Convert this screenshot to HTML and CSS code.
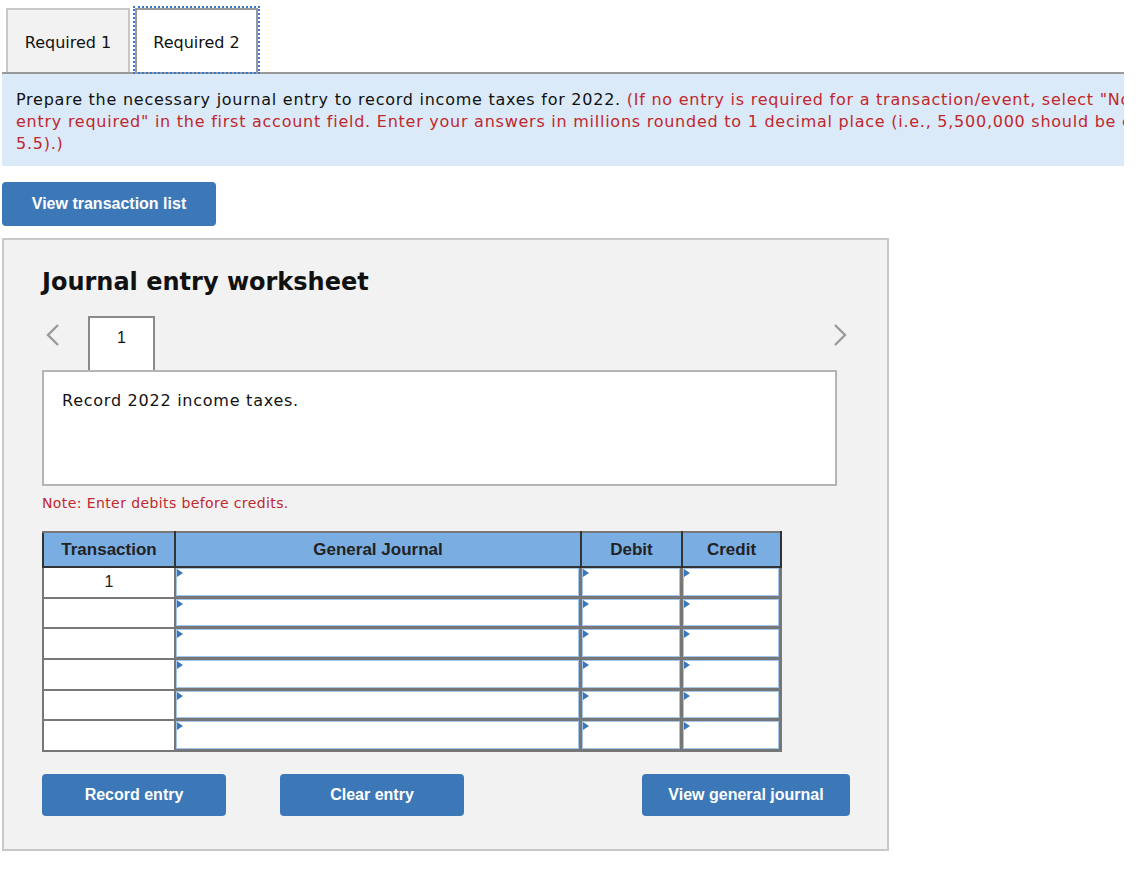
FILE: index.html
```html
<!DOCTYPE html>
<html lang="en">
<head>
  <meta charset="UTF-8">
  <meta name="viewport" content="width=device-width, initial-scale=1.0">
  <title>Journal entry worksheet</title>
  <link rel="stylesheet" href="styles.css">
</head>
<body>
  <div class="page">
    <div class="tabs">
      <div class="tab">Required 1</div>
      <div class="tab active">Required 2</div>
    </div>
    <div class="instructions">
      <p>Prepare the necessary journal entry to record income taxes for 2022. <span class="red">(If no entry is required for a transaction/event, select "No</span><br>
      <span class="red">entry required" in the first account field. Enter your answers in millions rounded to 1 decimal place (i.e., 5,500,000 should be entered as</span><br>
      <span class="red">5.5).)</span></p>
    </div>
    <button class="btn btn-list">View transaction list</button>

    <div class="worksheet">
      <h2>Journal entry worksheet</h2>
      <div class="nav">
        <svg class="chevron" width="14" height="24" viewBox="0 0 14 24"><polyline points="12,2 2,12 12,22" fill="none" stroke="#9a9a9a" stroke-width="2.4"/></svg>
        <div class="step">1</div>
        <svg class="chevron right" width="14" height="24" viewBox="0 0 14 24"><polyline points="2,2 12,12 2,22" fill="none" stroke="#9a9a9a" stroke-width="2.4"/></svg>
      </div>
      <div class="description">Record 2022 income taxes.</div>
      <p class="note">Note: Enter debits before credits.</p>

      <table class="journal">
        <thead>
          <tr>
            <th class="col-tr">Transaction</th>
            <th class="col-gj">General Journal</th>
            <th class="col-dr">Debit</th>
            <th class="col-cr">Credit</th>
          </tr>
        </thead>
        <tbody>
          <tr><td class="tr">1</td><td class="cell"><div class="field"></div></td><td class="cell"><div class="field"></div></td><td class="cell"><div class="field"></div></td></tr>
          <tr><td class="tr"></td><td class="cell"><div class="field"></div></td><td class="cell"><div class="field"></div></td><td class="cell"><div class="field"></div></td></tr>
          <tr><td class="tr"></td><td class="cell"><div class="field"></div></td><td class="cell"><div class="field"></div></td><td class="cell"><div class="field"></div></td></tr>
          <tr><td class="tr"></td><td class="cell"><div class="field"></div></td><td class="cell"><div class="field"></div></td><td class="cell"><div class="field"></div></td></tr>
          <tr><td class="tr"></td><td class="cell"><div class="field"></div></td><td class="cell"><div class="field"></div></td><td class="cell"><div class="field"></div></td></tr>
          <tr><td class="tr"></td><td class="cell"><div class="field"></div></td><td class="cell"><div class="field"></div></td><td class="cell"><div class="field"></div></td></tr>
        </tbody>
      </table>

      <div class="actions">
        <button class="btn btn-record">Record entry</button>
        <button class="btn btn-clear">Clear entry</button>
        <button class="btn btn-journal">View general journal</button>
      </div>
    </div>
  </div>
</body>
</html>
```

FILE: styles.css
```css
body {
  margin: 0;
  font-family: "DejaVu Sans", Verdana, sans-serif;
  color: #111;
  background: #fff;
}
.page {
  width: 1122px;
  padding-left: 2px;
}
.tabs {
  display: flex;
  gap: 5px;
  padding: 8px 0 0 4px;
  border-bottom: 2px solid #999;
}
.tab {
  box-sizing: border-box;
  width: 124px;
  height: 64px;
  line-height: 66px;
  text-align: center;
  font-size: 16px;
  background: #f2f2f2;
  border: 2px solid #c8c8c8;
  border-bottom: none;
}
.tab.active {
  width: 123px;
  background: #fff;
  border-color: #9a9a9a;
  outline: 2px dotted #3a78c8;
  outline-offset: 0;
}
/* the instruction text runs past the right edge and is clipped, as on the original page */
.instructions {
  height: 92px;
  overflow: hidden;
  background: #dbeaf8;
}
.instructions p {
  margin: 0;
  padding: 15px 0 0 14px;
  font-size: 16px;
  line-height: 22px;
  letter-spacing: 0.75px;
  white-space: nowrap;
}
.red {
  color: #c1272d;
}
.btn {
  border: none;
  border-radius: 4px;
  background: #3c78b8;
  color: #fff;
  font-family: "Liberation Sans", Arial, sans-serif;
  font-weight: bold;
  font-size: 16px;
  cursor: pointer;
}
.btn-list {
  display: block;
  margin-top: 16px;
  width: 214px;
  height: 44px;
}
.worksheet {
  box-sizing: border-box;
  width: 887px;
  margin-top: 12px;
  padding: 0 37px 33px 38px;
  background: #f2f2f2;
  border: 2px solid #c8c8c8;
}
.worksheet h2 {
  margin: 0;
  padding-top: 28px;
  font-size: 24px;
  line-height: 28px;
}
.nav {
  display: flex;
  align-items: flex-start;
  margin-top: 20px;
}
.chevron {
  margin: 7px 0 0 4px;
}
.chevron.right {
  margin: 7px 3px 0 auto;
}
.step {
  box-sizing: border-box;
  width: 67px;
  height: 54px;
  margin-left: 28px;
  padding-top: 11px;
  text-align: center;
  font-family: "Liberation Sans", Arial, sans-serif;
  font-size: 16px;
  background: #fff;
  border: 2px solid #8a8a8a;
  border-bottom: none;
}
.description {
  box-sizing: border-box;
  width: 795px;
  height: 116px;
  padding: 18px 18px;
  font-size: 16px;
  line-height: 22px;
  letter-spacing: 0.75px;
  background: #fff;
  border: 2px solid #b5b5b5;
}
.note {
  margin: 8px 0 0;
  font-size: 14px;
  line-height: 18px;
  letter-spacing: 0.4px;
  color: #c1272d;
}
.journal {
  margin-top: 19px;
  border-collapse: collapse;
  table-layout: fixed;
  font-family: "Liberation Sans", Arial, sans-serif;
  font-size: 16px;
}
.journal th {
  height: 33px;
  padding: 0;
  background: #7aade2;
  color: #222;
  font-size: 17px;
  font-weight: bold;
  border: 2px solid #333;
  border-top-color: #777;
}
.col-tr { width: 130px; }
.col-gj { width: 404px; }
.col-dr { width: 99px; }
.col-cr { width: 97px; }
.journal td {
  height: 28.67px;
  padding: 0;
  border: 2px solid #777;
  background: #fff;
}
.journal td.tr {
  height: 23.67px;
  padding-top: 5px;
  text-align: center;
  vertical-align: top;
  color: #222;
}
.journal td.cell {
  background: #777;
  padding: 0 1px 1px 0;
  height: 27.67px;
}
.field {
  position: relative;
  box-sizing: border-box;
  height: 27.67px;
  background: #fff;
  border: 1px solid #a4c5ea;
}
.field::before {
  content: "";
  position: absolute;
  left: 0;
  top: 0;
  border-left: 6px solid #3a78bd;
  border-top: 4px solid transparent;
  border-bottom: 4px solid transparent;
}
.actions {
  display: flex;
  margin-top: 22px;
}
.actions .btn {
  height: 42px;
}
.btn-record {
  width: 184px;
}
.btn-clear {
  width: 184px;
  margin-left: 54px;
}
.btn-journal {
  width: 208px;
  margin-left: auto;
}
```
